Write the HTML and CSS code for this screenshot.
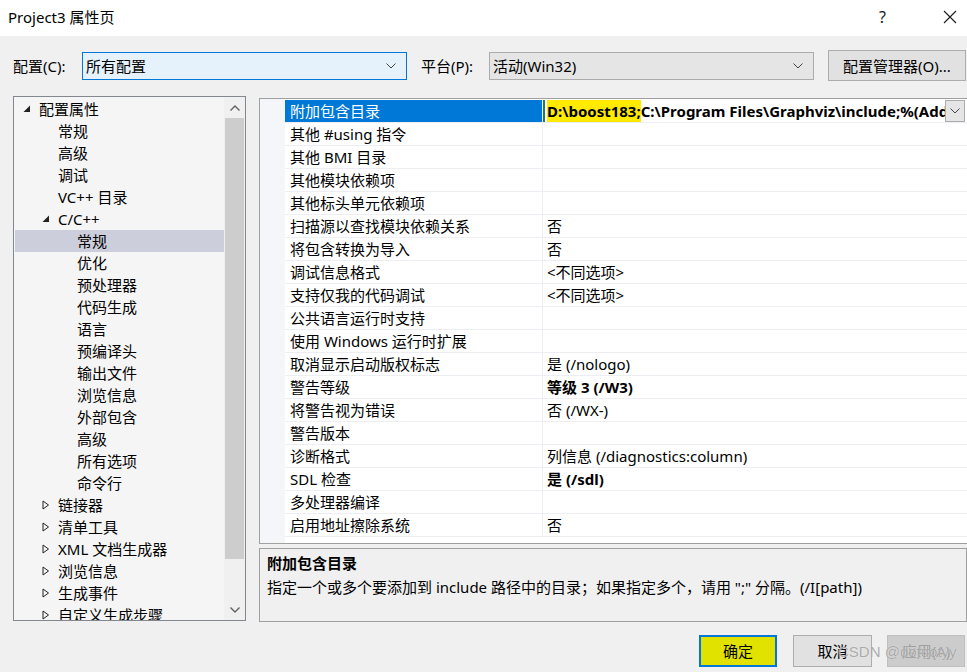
FILE: index.html
```html
<!DOCTYPE html>
<html lang="zh-CN">
<head>
<meta charset="utf-8">
<title>Project3 属性页</title>
<link rel="stylesheet" href="styles.css">
</head>
<body>
<div class="dialog">
  <div class="titlebar">
    <span class="title">Project3 属性页</span>
    <span class="tb-help">?</span>
    <span class="tb-close"><svg width="14" height="14" viewBox="0 0 14 14"><path d="M1 1L13 13M13 1L1 13" stroke="#1a1a1a" stroke-width="1.1" fill="none"/></svg></span>
  </div>

  <div class="config-row">
    <span class="lbl lbl-config">配置(C):</span>
    <div class="combo combo-active"><span>所有配置</span><svg class="chev" width="10" height="6" viewBox="0 0 10 6"><path d="M0.5 0.5L5 5L9.5 0.5" stroke="#444" fill="none"/></svg></div>
    <span class="lbl lbl-platform">平台(P):</span>
    <div class="combo combo-grey"><span>活动(Win32)</span><svg class="chev" width="10" height="6" viewBox="0 0 10 6"><path d="M0.5 0.5L5 5L9.5 0.5" stroke="#444" fill="none"/></svg></div>
    <div class="btn btn-mgr">配置管理器(O)...</div>
  </div>

  <div class="main">
    <div class="tree">
      <div class="tree-list">
        <div class="node l0"><span class="tg"><svg width="8" height="8" viewBox="0 0 8 8"><path d="M7 0.5V7H0.5Z" fill="#222"/></svg></span>配置属性</div>
        <div class="node l1"><span class="tg"></span>常规</div>
        <div class="node l1"><span class="tg"></span>高级</div>
        <div class="node l1"><span class="tg"></span>调试</div>
        <div class="node l1"><span class="tg"></span>VC++ 目录</div>
        <div class="node l1"><span class="tg"><svg width="8" height="8" viewBox="0 0 8 8"><path d="M7 0.5V7H0.5Z" fill="#222"/></svg></span>C/C++</div>
        <div class="node l2 sel"><span class="tg"></span>常规</div>
        <div class="node l2"><span class="tg"></span>优化</div>
        <div class="node l2"><span class="tg"></span>预处理器</div>
        <div class="node l2"><span class="tg"></span>代码生成</div>
        <div class="node l2"><span class="tg"></span>语言</div>
        <div class="node l2"><span class="tg"></span>预编译头</div>
        <div class="node l2"><span class="tg"></span>输出文件</div>
        <div class="node l2"><span class="tg"></span>浏览信息</div>
        <div class="node l2"><span class="tg"></span>外部包含</div>
        <div class="node l2"><span class="tg"></span>高级</div>
        <div class="node l2"><span class="tg"></span>所有选项</div>
        <div class="node l2"><span class="tg"></span>命令行</div>
        <div class="node l1"><span class="tg"><svg width="8" height="10" viewBox="0 0 8 10"><path d="M1 1L6.5 5L1 9Z" stroke="#222" fill="none"/></svg></span>链接器</div>
        <div class="node l1"><span class="tg"><svg width="8" height="10" viewBox="0 0 8 10"><path d="M1 1L6.5 5L1 9Z" stroke="#222" fill="none"/></svg></span>清单工具</div>
        <div class="node l1"><span class="tg"><svg width="8" height="10" viewBox="0 0 8 10"><path d="M1 1L6.5 5L1 9Z" stroke="#222" fill="none"/></svg></span>XML 文档生成器</div>
        <div class="node l1"><span class="tg"><svg width="8" height="10" viewBox="0 0 8 10"><path d="M1 1L6.5 5L1 9Z" stroke="#222" fill="none"/></svg></span>浏览信息</div>
        <div class="node l1"><span class="tg"><svg width="8" height="10" viewBox="0 0 8 10"><path d="M1 1L6.5 5L1 9Z" stroke="#222" fill="none"/></svg></span>生成事件</div>
        <div class="node l1"><span class="tg"><svg width="8" height="10" viewBox="0 0 8 10"><path d="M1 1L6.5 5L1 9Z" stroke="#222" fill="none"/></svg></span>自定义生成步骤</div>
      </div>
      <div class="vscroll">
        <div class="sb-arrow"><svg width="10" height="6" viewBox="0 0 10 6"><path d="M0.5 5.5L5 1L9.5 5.5" stroke="#606060" stroke-width="1.4" fill="none"/></svg></div>
        <div class="sb-track"><div class="sb-thumb"></div></div>
        <div class="sb-arrow"><svg width="10" height="6" viewBox="0 0 10 6"><path d="M0.5 0.5L5 5L9.5 0.5" stroke="#606060" stroke-width="1.4" fill="none"/></svg></div>
      </div>
    </div>

    <div class="right">
      <div class="grid">
        <div class="gutter"></div>
        <div class="rows">
          <div class="row"><div class="name name-sel">附加包含目录</div><div class="val val-edit"><span class="v-text bold"><span class="hl">D:\boost183;</span>C:\Program Files\Graphviz\include;%(AdditionalIncludeDirectories)</span><span class="dd"><svg width="10" height="6" viewBox="0 0 10 6"><path d="M0.5 0.5L5 5L9.5 0.5" stroke="#444" fill="none"/></svg></span></div></div>
          <div class="row"><div class="name">其他 #using 指令</div><div class="val"></div></div>
          <div class="row"><div class="name">其他 BMI 目录</div><div class="val"></div></div>
          <div class="row"><div class="name">其他模块依赖项</div><div class="val"></div></div>
          <div class="row"><div class="name">其他标头单元依赖项</div><div class="val"></div></div>
          <div class="row"><div class="name">扫描源以查找模块依赖关系</div><div class="val">否</div></div>
          <div class="row"><div class="name">将包含转换为导入</div><div class="val">否</div></div>
          <div class="row"><div class="name">调试信息格式</div><div class="val">&lt;不同选项&gt;</div></div>
          <div class="row"><div class="name">支持仅我的代码调试</div><div class="val">&lt;不同选项&gt;</div></div>
          <div class="row"><div class="name">公共语言运行时支持</div><div class="val"></div></div>
          <div class="row"><div class="name">使用 Windows 运行时扩展</div><div class="val"></div></div>
          <div class="row"><div class="name">取消显示启动版权标志</div><div class="val">是 (/nologo)</div></div>
          <div class="row"><div class="name">警告等级</div><div class="val bold">等级 3 (/W3)</div></div>
          <div class="row"><div class="name">将警告视为错误</div><div class="val">否 (/WX-)</div></div>
          <div class="row"><div class="name">警告版本</div><div class="val"></div></div>
          <div class="row"><div class="name">诊断格式</div><div class="val">列信息 (/diagnostics:column)</div></div>
          <div class="row"><div class="name">SDL 检查</div><div class="val bold">是 (/sdl)</div></div>
          <div class="row"><div class="name">多处理器编译</div><div class="val"></div></div>
          <div class="row"><div class="name">启用地址擦除系统</div><div class="val">否</div></div>
        </div>
      </div>
      <div class="desc">
        <div class="desc-title">附加包含目录</div>
        <div class="desc-text">指定一个或多个要添加到 include 路径中的目录；如果指定多个，请用 ";" 分隔。(/I[path])</div>
      </div>
    </div>
  </div>

  <div class="buttons">
    <div class="btn btn-ok">确定</div>
    <div class="btn btn-cancel">取消</div>
    <div class="btn btn-apply">应用(A)</div>
  </div>

  <div class="watermark">CSDN @dotdotyy</div>
</div>
</body>
</html>
```

FILE: styles.css
```css
html, body {
  margin: 0;
  padding: 0;
}
body {
  width: 967px;
  height: 672px;
  overflow: hidden;
  background: #f0f0f0;
  font-family: "Noto Sans", "Noto Sans CJK SC", sans-serif;
  font-size: 15px;
  color: #000;
}
.dialog {
  position: relative;
  width: 967px;
  height: 672px;
  display: flex;
  flex-direction: column;
}

/* title bar */
.titlebar {
  height: 36px;
  background: #fff;
  display: flex;
  align-items: center;
  padding-left: 8px;
  box-sizing: border-box;
}
.title {
  flex: 1;
  font-size: 15px;
  line-height: 20px;
  padding-bottom: 2px;
}
.tb-help {
  font-size: 16px;
  width: 20px;
  margin-right: 44px;
  color: #1a1a1a;
  padding-bottom: 2px;
}
.tb-close {
  width: 14px;
  height: 14px;
  margin-right: 10px;
  display: flex;
  margin-bottom: 2px;
}

/* config row */
.config-row {
  margin-top: 14px;
  height: 31px;
  display: flex;
  align-items: center;
  padding-left: 13px;
}
.lbl {
  line-height: 20px;
  flex: none;
}
.lbl-config { width: 69px; }
.lbl-platform { margin-left: 14px; width: 68px; }
.combo {
  box-sizing: border-box;
  height: 28px;
  width: 325px;
  flex: none;
  display: flex;
  align-items: center;
  justify-content: space-between;
  padding: 0 10px 0 3px;
  line-height: 20px;
}
.combo-active {
  background: #e5f1fb;
  border: 1px solid #0078d7;
}
.combo-grey {
  background: #e5e5e5;
  border: 1px solid #acacac;
}
.chev { display: block; }
.btn {
  box-sizing: border-box;
  display: flex;
  align-items: center;
  justify-content: center;
  line-height: 20px;
  flex: none;
}
.btn-mgr {
  margin-left: 14px;
  width: 138px;
  height: 31px;
  background: #e1e1e1;
  border: 1px solid #adadad;
}

/* main */
.main {
  margin-top: 15px;
  display: flex;
  height: 526px;
}
.tree {
  margin-left: 13px;
  width: 233px;
  flex: none;
  height: 525px;
  box-sizing: border-box;
  border: 1px solid #828790;
  background: #f5f5f5;
  display: flex;
  overflow: hidden;
}
.tree-list {
  flex: 1;
  min-width: 0;
  padding-top: 1px;
  padding-left: 1px;
  overflow: hidden;
}
.node {
  height: 22px;
  display: flex;
  align-items: center;
  white-space: nowrap;
  line-height: 20px;
}
.node .tg {
  width: 16px;
  flex: none;
  display: flex;
  align-items: center;
}
.node .tg svg { display: block; }
.l0 { padding-left: 8px; }
.l1 { padding-left: 27px; }
.l2 { padding-left: 46px; }
.sel { background: #cccedb; }
.vscroll {
  width: 21px;
  flex: none;
  display: flex;
  flex-direction: column;
  background: #f0f0f0;
}
.sb-arrow {
  height: 21px;
  display: flex;
  align-items: center;
  justify-content: center;
}
.sb-track {
  flex: 1;
  padding: 0 1px;
  display: flex;
  flex-direction: column;
}
.sb-thumb {
  height: 441px;
  background: #cdcdcd;
}

.right {
  margin-left: 13px;
  width: 708px;
  flex: none;
  min-width: 0;
  display: flex;
  flex-direction: column;
}
.grid {
  margin-top: 2px;
  height: 447px;
  box-sizing: border-box;
  border: 1px solid #a0a0a0;
  border-right: none;
  background: #fff;
  display: flex;
  overflow: hidden;
}
.gutter {
  width: 25px;
  background: #f5f6fa;
  flex: none;
}
.rows {
  flex: 1;
  min-width: 0;
  padding-top: 1px;
  overflow: hidden;
}
.row {
  height: 23px;
  display: flex;
  box-sizing: border-box;
  border-bottom: 1px solid #eceef3;
}
.name {
  width: 258px;
  flex: none;
  box-sizing: border-box;
  border-right: 1px solid #eceef3;
  padding-left: 5px;
  line-height: 22px;
  white-space: nowrap;
}
.name-sel {
  background: #0078d7;
  color: #fff;
}
.val {
  flex: 1;
  min-width: 0;
  padding-left: 4px;
  line-height: 22px;
  white-space: nowrap;
  overflow: hidden;
}
.bold { font-weight: bold; }
.val-edit {
  display: flex;
  padding-left: 0;
  border-left: 2px solid #1f7a6a;
}
.v-text {
  flex: 1;
  min-width: 0;
  overflow: hidden;
  padding-left: 2px;
  white-space: nowrap;
}
.hl {
  background: #ffea00;
  box-shadow: 0 -6px 0 #ffea00, 0 3px 0 #ffea00;
}
.dd {
  width: 20px;
  height: 22px;
  margin-right: 2px;
  box-sizing: border-box;
  background: #e5e5e5;
  border: 1px solid #acacac;
  display: flex;
  align-items: center;
  justify-content: center;
  flex: none;
}
.desc {
  margin-top: 4px;
  height: 74px;
  width: 708px;
  box-sizing: border-box;
  border: 1px solid #a0a0a0;
  background: #f0f0f0;
  padding: 3px 0 0 7px;
}
.desc-title {
  font-weight: bold;
  line-height: 22px;
}
.desc-text {
  line-height: 22px;
  margin-top: 2px;
  white-space: nowrap;
}

/* buttons */
.buttons {
  margin-top: 13px;
  display: flex;
  justify-content: flex-end;
  padding-right: 2px;
}
.btn-ok, .btn-cancel, .btn-apply {
  height: 32px;
  width: 78px;
}
.btn-ok {
  background: #e2e200;
  border: 2px solid #0078d7;
}
.btn-cancel {
  margin-left: 16px;
  width: 79px;
  background: #e1e1e1;
  border: 1px solid #adadad;
}
.btn-apply {
  margin-left: 15px;
  background: #cccccc;
  border: 1px solid #bfbfbf;
  color: #a0a0a0;
}
.watermark {
  position: absolute;
  left: 838px;
  top: 642px;
  font-family: "Liberation Sans", sans-serif;
  font-size: 15px;
  line-height: 20px;
  color: rgba(150, 150, 150, 0.8);
  text-shadow: 0 0 1px rgba(255,255,255,0.8);
}
```
